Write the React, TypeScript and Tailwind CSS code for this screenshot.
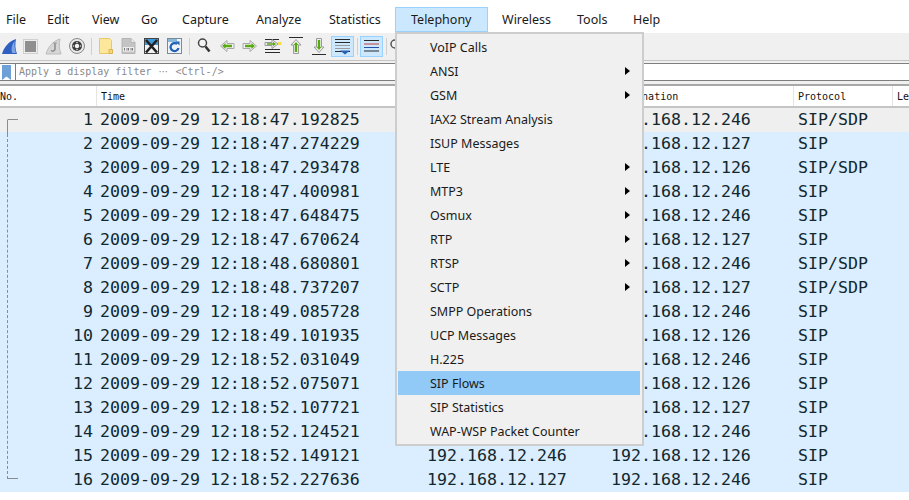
import React from 'react';

const menus = [
  { label: 'File', cls: 'w-[31px] pl-[6px]' },
  { label: 'Edit', cls: 'w-[45px] pl-[16px]' },
  { label: 'View', cls: 'w-[49px] pl-[16px]' },
  { label: 'Go', cls: 'w-[41px] pl-[16px]' },
  { label: 'Capture', cls: 'w-[74px] pl-[16px]' },
  { label: 'Analyze', cls: 'w-[73px] pl-[16px]' },
  { label: 'Statistics', cls: 'w-[82px] pl-[16px]' },
];

const telephony: [string, boolean][] = [
  ['VoIP Calls', false],
  ['ANSI', true],
  ['GSM', true],
  ['IAX2 Stream Analysis', false],
  ['ISUP Messages', false],
  ['LTE', true],
  ['MTP3', true],
  ['Osmux', true],
  ['RTP', true],
  ['RTSP', true],
  ['SCTP', true],
  ['SMPP Operations', false],
  ['UCP Messages', false],
  ['H.225', false],
  ['SIP Flows', false],
  ['SIP Statistics', false],
  ['WAP-WSP Packet Counter', false],
];

// source column is hidden behind the open menu for rows 1-14
const packets = [
  ['47.192825', '', '192.168.12.246', 'SIP/SDP'],
  ['47.274229', '', '192.168.12.127', 'SIP'],
  ['47.293478', '', '192.168.12.126', 'SIP/SDP'],
  ['47.400981', '', '192.168.12.246', 'SIP'],
  ['47.648475', '', '192.168.12.246', 'SIP'],
  ['47.670624', '', '192.168.12.127', 'SIP'],
  ['48.680801', '', '192.168.12.246', 'SIP/SDP'],
  ['48.737207', '', '192.168.12.127', 'SIP/SDP'],
  ['49.085728', '', '192.168.12.246', 'SIP'],
  ['49.101935', '', '192.168.12.126', 'SIP'],
  ['52.031049', '', '192.168.12.246', 'SIP'],
  ['52.075071', '', '192.168.12.126', 'SIP'],
  ['52.107721', '', '192.168.12.127', 'SIP'],
  ['52.124521', '', '192.168.12.246', 'SIP'],
  ['52.149121', '192.168.12.246', '192.168.12.126', 'SIP'],
  ['52.227636', '192.168.12.127', '192.168.12.246', 'SIP'],
];

const Icon = ({ children, w = 18 }: { children: React.ReactNode; w?: number }) => (
  <svg width={w} height="20" viewBox={`0 0 ${w} 20`} fill="none">
    {children}
  </svg>
);

const Slot = ({ children, cls = 'w-[23px]' }: { children?: React.ReactNode; cls?: string }) => (
  <div className={`flex h-full shrink-0 items-center justify-center ${cls}`}>{children}</div>
);

const Sep = ({ cls = 'w-[6px]' }: { cls?: string }) => (
  <div className={`flex h-full shrink-0 items-center justify-center ${cls}`}>
    <div className="h-[17px] w-px bg-[#d0d0d0]" />
  </div>
);

const GreenArrow = ({ dir }: { dir: 'left' | 'right' }) => (
  <Icon w={16}>
    <g transform={dir === 'left' ? 'translate(16 0) scale(-1 1)' : undefined}>
      <path d="M1 7.5h7V4.5l6.5 5.5L8 15.5v-3H1z" fill="#f2f2f2" stroke="#a8a8a8" />
      <path d="M3 8.8h6.500V7l3.400 3-3.400 3v-1.800H3z" fill="#5aaa12" />
    </g>
  </Icon>
);

const Toolbar = () => (
  <div className="flex h-[26px] items-center bg-[#f0f0f0]">
    {/* capture */}
    <Slot cls="w-[19px]">
      <Icon>
        <path d="M1 18C3 11 8 5 15 3c-1 5-1 10 1 15z" fill="#2f5fc0" />
        <path d="M11 17c-1-4-.5-8 2.500-12 0 4 0 8 1.500 12z" fill="#7fa4e6" />
      </Icon>
    </Slot>
    <Slot>
      <div className="flex h-[15px] w-[15px] items-center justify-center border border-[#d0d0d0] bg-[#eeeeee]">
        <div className="h-[11px] w-[11px] bg-[#8f8f8f]" />
      </div>
    </Slot>
    <Slot>
      <Icon w={17}>
        <path d="M1 18C3 11 8 5 15 3c-1 5-1 10 1 15z" fill="#d6d6d6" stroke="#bcbcbc" />
        <path d="M10 7v6.500a2.500 2.500 0 0 1-4 1" stroke="#8c8c8c" strokeWidth="1.500" />
        <path d="M8 7h4" stroke="#a0a0a0" />
      </Icon>
    </Slot>
    <Slot>
      <Icon>
        <circle cx="9" cy="10" r="7.500" fill="#e8e8e8" stroke="#8a8a8a" />
        <circle cx="9" cy="10" r="5" fill="#3c3c3c" />
        <circle cx="9" cy="10" r="2.200" fill="#f4f4f4" />
        <circle cx="9" cy="6.500" r=".8" fill="#ddd" />
        <circle cx="9" cy="13.500" r=".8" fill="#ddd" />
        <circle cx="5.500" cy="10" r=".8" fill="#ddd" />
        <circle cx="12.500" cy="10" r=".8" fill="#ddd" />
      </Icon>
    </Slot>
    <Sep />
    {/* files */}
    <Slot>
      <Icon w={14}>
        <path d="M.5 2.500h10l2 2v13H.5z" fill="#fde79a" stroke="#e8c868" />
        <path d="M10 13.500h3.500v4H10z" fill="#f6d878" stroke="#d9b450" />
      </Icon>
    </Slot>
    <Slot>
      <Icon w={15}>
        <path d="M1 2.500h9l4 4v11H1z" fill="#c4c4c4" stroke="#b4b4b4" />
        <path d="M10 2.500v4h4" fill="#eeeeee" stroke="#b4b4b4" />
        <rect x="2" y="11" width="11" height="4.500" fill="#efefef" />
        <path d="M3.500 12v2.500M6 12v2.500M7.500 12v2.500M10 12v2.500M11.500 12v2.500" stroke="#777" />
      </Icon>
    </Slot>
    <Slot>
      <Icon w={15}>
        <rect x=".5" y="2.500" width="14" height="15" fill="#f2f2f2" stroke="#444" />
        <path d="M1 3h13v6H1z" fill="#3e9ad8" />
        <path d="M2 4l11 12.500M13 4L2 16.500" stroke="#222" strokeWidth="2.600" />
      </Icon>
    </Slot>
    <Slot>
      <Icon w={15}>
        <rect x=".5" y="2.500" width="14" height="15" fill="#eef3f8" stroke="#7c8a96" />
        <path d="M1 3h9v3H1z" fill="#88b8dc" />
        <path d="M11.500 12a4 4 0 1 1-1.300-4" stroke="#1f5fb4" strokeWidth="2.200" />
        <path d="M8.500 5.500h4v4z" fill="#1f5fb4" />
      </Icon>
    </Slot>
    <Sep />
    {/* navigation */}
    <Slot>
      <Icon w={14}>
        <circle cx="5.500" cy="7" r="4" fill="#f4f4f4" stroke="#444" strokeWidth="1.500" />
        <path d="M8.500 10.500l4 5" stroke="#333" strokeWidth="2.600" />
      </Icon>
    </Slot>
    <Slot><GreenArrow dir="left" /></Slot>
    <Slot><GreenArrow dir="right" /></Slot>
    <Slot>
      <Icon>
        <path d="M1 3.500h14M1 13.500h15M1 16.500h15" stroke="#2a2a2a" />
        <path d="M1 6.500h7V3.500l6 4.500-6 4.500v-3H1z" fill="#f0f0f0" stroke="#9a9a9a" />
        <path d="M3 7.200h6V5.800l3 2.200-3 2.200V8.800H3z" fill="#5aaa12" />
        <rect x="14" y="6" width="3.500" height="3" fill="#f6e04a" />
      </Icon>
    </Slot>
    <Slot>
      <Icon w={16}>
        <path d="M1 1.500h14" stroke="#2a2a2a" />
        <path d="M8 3.500l5 5.500h-2.500v8.500h-5V9H3z" fill="#f0f0f0" stroke="#9a9a9a" />
        <path d="M8 6l2.500 3H9.200v7H6.800V9H5.500z" fill="#5aaa12" />
      </Icon>
    </Slot>
    <Slot>
      <Icon w={16}>
        <path d="M1 18.500h14" stroke="#2a2a2a" />
        <path d="M8 16.500l5-5.500h-2.500V2.500h-5V11H3z" fill="#f0f0f0" stroke="#9a9a9a" />
        <path d="M8 14l2.500-3H9.200V4H6.800v7H5.500z" fill="#5aaa12" />
      </Icon>
    </Slot>
    <Slot cls="ml-px h-[21px]! w-[23px] border border-[#99d1ff] bg-[#cce8ff]">
      <Icon w={17}>
        <path d="M1 3.500h15M1 6.500h15" stroke="#2a2a2a" />
        <path d="M1 9.500h15M1 12.500h15" stroke="#9a9a9a" />
        <path d="M1 15.500h15" stroke="#2a2a2a" />
        <path d="M6 14.500h10l-5 4z" fill="#2b62b0" />
      </Icon>
    </Slot>
    <Sep cls="w-[6px]" />
    <Slot cls="h-[21px]! w-[23px] border border-[#99d1ff] bg-[#cce8ff]">
      <Icon w={17}>
        <path d="M1 4.500h15" stroke="#2a2a2a" />
        <path d="M1 8h15" stroke="#c23a3a" />
        <path d="M1 11.500h15" stroke="#2b4fa8" />
        <path d="M1 15h15" stroke="#2a2a2a" />
      </Icon>
    </Slot>
    <Sep cls="w-[6px]" />
    <Slot cls="w-[12px]">
      <Icon w={12}>
        <circle cx="6" cy="8" r="4" fill="#f4f4f4" stroke="#555" strokeWidth="1.500" />
      </Icon>
    </Slot>
  </div>
);

const FilterBar = () => (
  <div className="bg-[#f0f0f0] pt-px">
    <div className="h-px bg-[#c4c4c4]" />
    <div className="mt-[2px] flex h-[18px] border-y border-[#7f7f7f] bg-white">
      <div className="flex w-[16px] items-center border-r border-[#7f7f7f] pl-[2px]">
        <svg width="9" height="15" viewBox="0 0 9 15">
          <path d="M0 0h9v15L4.500 11.500 0 15z" fill="#6ea0d8" />
        </svg>
      </div>
      <div className="whitespace-pre pl-[3px] font-['DejaVu_Sans_Mono',monospace] text-[10px] leading-[16px] text-[#8a8a8a]">
        Apply a display filter <span className="inline-block w-[12px] text-center font-['DejaVu_Sans',sans-serif]">⋯</span> {'<Ctrl-/>'}
      </div>
    </div>
  </div>
);

const Header = () => {
  const cell = 'flex h-full shrink-0 items-center border-r border-[#e4e4e4] pl-[4px]';
  return (
    <div className="bg-[#f0f0f0] pt-[3px]">
      <div className="flex h-[24px] border-y-2 border-t-[#a8a8a8] border-b-[#c4c4c4] bg-white font-['DejaVu_Sans_Mono',monospace] text-[10px] text-[#111]">
        <div className={`${cell} w-[97px] pl-0!`}>No.</div>
        <div className={`${cell} w-[327px]`}>Time</div>
        <div className={`${cell} w-[184px]`}>Source</div>
        <div className={`${cell} w-[186px]`}>Destination</div>
        <div className={`${cell} w-[99px]`}>Protocol</div>
        <div className="flex h-full items-center pl-[4px]">Length</div>
      </div>
    </div>
  );
};

const PacketList = () => (
  <div className="relative font-['DejaVu_Sans_Mono',monospace] text-[16.6px] text-[#12272e]">
    {packets.map((p, i) => (
      <div key={i} className={`flex h-[24px] items-center whitespace-pre ${i === 0 ? 'bg-[#efefef]' : 'bg-[#daeeff]'}`}>
        <div className="w-[93px] shrink-0 text-right">{i + 1}</div>
        <div className="w-[334px] shrink-0 pl-[7px]">2009-09-29 12:18:{p[0]}</div>
        <div className="w-[184px] shrink-0">{p[1]}</div>
        <div className="w-[187px] shrink-0">{p[2]}</div>
        <div>{p[3]}</div>
      </div>
    ))}
    {/* conversation bracket */}
    <div className="absolute top-[11px] left-[7px] h-[360px] w-[11px] border-y border-l border-l-transparent border-[#8c8c8c]" />
    <div className="absolute top-[12px] left-[7px] h-[14px] w-px bg-[#8c8c8c]" />
    <div className="absolute top-[26px] left-[7px] h-[345px] border-l border-dashed border-[#8c8c8c]" />
  </div>
);

const TelephonyMenu = () => (
  <div className="absolute top-[32px] left-[395px] w-[249px] border-2 border-[#cdcdcd] bg-[#f0f0f0] px-[1px] py-px pr-[2px] text-[#1a1a1a] font-['Noto_Sans',sans-serif] text-[12.5px]">
    {telephony.map(([label, sub]) => (
      <div key={label} className={`relative flex h-[24px] items-center pl-[32px] pt-[2px] ${label === 'SIP Flows' ? 'bg-[#91c9f7]' : ''}`}>
        {label}
        {sub && <div className="absolute top-[8px] right-[10px] h-0 w-0 border-y-[4px] border-l-[5px] border-y-transparent border-l-black" />}
      </div>
    ))}
  </div>
);

const App = () => {
  return (
    <div className="relative h-[500px] w-[909px] overflow-hidden bg-white">
      {/* Menu bar */}
      <div className="flex h-[33px] items-end pb-px font-['Noto_Sans',sans-serif] text-[12.5px] text-[#1a1a1a]">
        {menus.map(m => (
          <div key={m.label} className={`flex h-[25px] shrink-0 items-center pt-[1px] ${m.cls}`}>{m.label}</div>
        ))}
        <div className="flex h-[25px] w-[93px] shrink-0 items-center border border-[#99d1ff] bg-[#cce8ff] pl-[15px] pt-[1px]">Telephony</div>
        <div className="flex h-[25px] w-[76px] shrink-0 items-center pl-[14px] pt-[1px]">Wireless</div>
        <div className="flex h-[25px] w-[56px] shrink-0 items-center pl-[13px] pt-[1px]">Tools</div>
        <div className="flex h-[25px] items-center pl-[13px] pt-[1px]">Help</div>
      </div>
      <Toolbar />
      <FilterBar />
      <Header />
      <PacketList />
      <TelephonyMenu />
    </div>
  );
};

export default App;
